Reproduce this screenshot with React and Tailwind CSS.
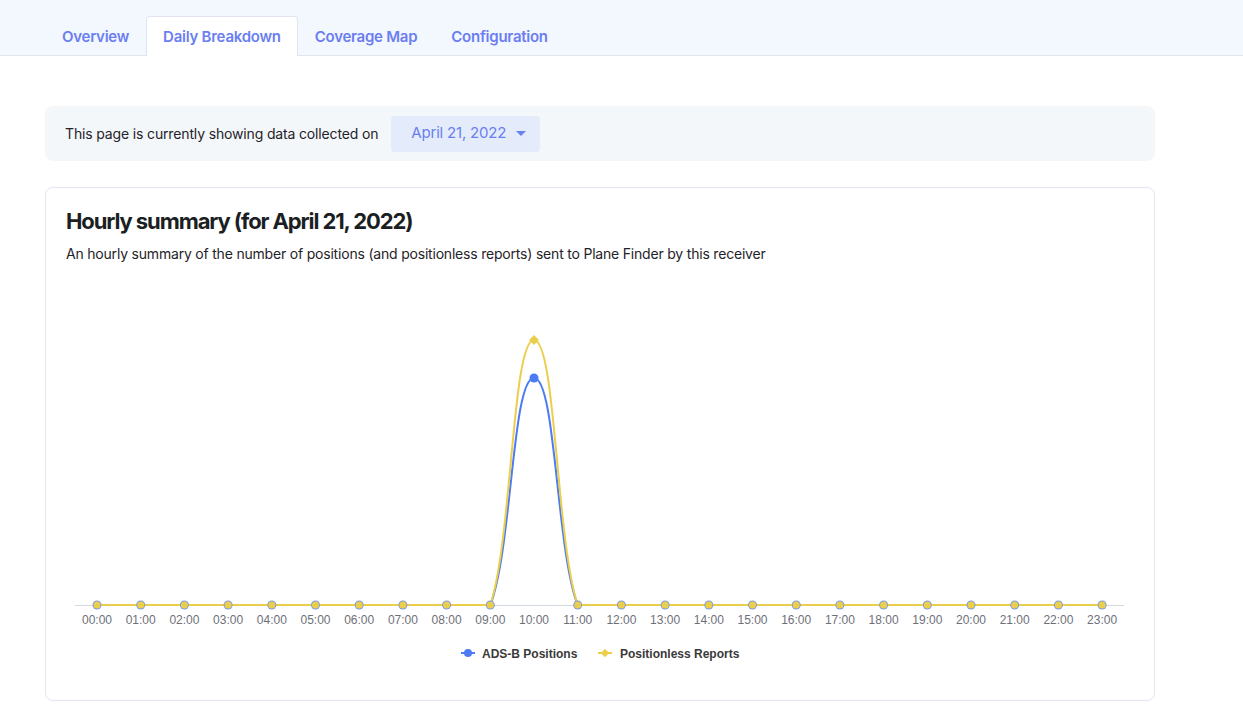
const TABS = ['Overview', 'Daily Breakdown', 'Coverage Map', 'Configuration'];

const HOURS = Array.from({ length: 24 }, (_, i) => `${String(i).padStart(2, '0')}:00`);

// values are already scaled to pixels above the axis
const ADSB = HOURS.map((_, i) => (i === 10 ? 227 : 0));
const POSITIONLESS = HOURS.map((_, i) => (i === 10 ? 265 : 0));

const X0 = 51;
const STEP = 43.7;
const BASE = 341;

function xAt(i) {
  return X0 + i * STEP;
}

// rough take on echarts' smooth line, clamped so flat runs stay flat
function smoothPath(values) {
  const pts = values.map((v, i) => [xAt(i), BASE - v]);
  const cps = pts.map((p, i) => {
    const prev = pts[i - 1] ?? p;
    const next = pts[i + 1] ?? p;
    const vx = (next[0] - prev[0]) * 0.25;
    let vy = (next[1] - prev[1]) * 0.25;
    if (prev[1] === p[1] && p[1] === next[1]) vy = 0;
    return {
      inn: [p[0] - vx, Math.min(BASE, Math.max(BASE - 265, p[1] - vy))],
      out: [p[0] + vx, Math.min(BASE, Math.max(BASE - 265, p[1] + vy))],
    };
  });
  let d = `M${pts[0][0]},${pts[0][1]}`;
  for (let i = 1; i < pts.length; i++) {
    const a = cps[i - 1].out;
    const b = cps[i].inn;
    d += ` C${a[0]},${a[1]} ${b[0]},${b[1]} ${pts[i][0]},${pts[i][1]}`;
  }
  return d;
}

function HourlyChart() {
  return (
    <svg width="1108" height="435" className="block">
      <line x1="29" y1={BASE + 0.5} x2="1078" y2={BASE + 0.5} stroke="#d3d9e4" strokeWidth="1" />
      <path d={smoothPath(ADSB)} fill="none" stroke="#4b7bf5" strokeWidth="2" />
      <path d={smoothPath(POSITIONLESS)} fill="none" stroke="#ebcf4c" strokeWidth="2" />
      {ADSB.map((v, i) => (
        <circle key={`a${i}`} cx={xAt(i)} cy={BASE - v} r="4.5" fill={v ? '#4b7bf5' : '#7e9be3'} />
      ))}
      {POSITIONLESS.map((v, i) =>
        v ? (
          <rect key={`p${i}`} x={xAt(i) - 3.5} y={BASE - v - 3.5} width="7" height="7" fill="#ebcf4c" transform={`rotate(45 ${xAt(i)} ${BASE - v})`} />
        ) : (
          <circle key={`p${i}`} cx={xAt(i)} cy={BASE - v} r="3.5" fill="#ebcf4c" />
        )
      )}
      {HOURS.map((h, i) => (
        <text
          key={h}
          x={xAt(i)}
          y="360"
          textAnchor="middle"
          fill="#6e7079"
          fontSize="12"
          fontFamily="'Liberation Sans', Arial, sans-serif"
        >
          {h}
        </text>
      ))}

      <g fontFamily="'Liberation Sans', Arial, sans-serif" fontSize="12" fontWeight="bold" fill="#3a3a3a">
        <line x1="415" y1="389" x2="429" y2="389" stroke="#4b7bf5" strokeWidth="2" />
        <circle cx="422" cy="389" r="4" fill="#4b7bf5" />
        <text x="436" y="393.5">ADS-B Positions</text>
        <line x1="552" y1="389" x2="566" y2="389" stroke="#ebcf4c" strokeWidth="2" />
        <rect x="556" y="386" width="6" height="6" fill="#ebcf4c" transform="rotate(45 559 389)" />
        <text x="574" y="393.5">Positionless Reports</text>
      </g>
    </svg>
  );
}

export default function App() {
  return (
    <div className="min-h-[726px] bg-white text-[#1f2329]" style={{ fontFamily: 'Inter, "Noto Sans", sans-serif' }}>
      <div className="h-[56px] bg-[#f3f7fe] border-b border-[#dfe4ee] flex items-end pl-[45px]">
        {TABS.map((tab) => {
          const active = tab === 'Daily Breakdown';
          return (
            <div
              key={tab}
              className={
                active
                  ? 'h-[40px] px-4 pt-px flex items-center bg-white border border-b-0 border-[#dfe4ee] rounded-t-[4px] -mb-px text-[15px] tracking-[-0.25px] font-semibold text-[#6a7ef2]'
                  : 'h-[40px] px-[17px] pt-[5px] flex items-center text-[15px] tracking-[-0.25px] font-semibold text-[#6a7ef2]'
              }
            >
              {tab}
            </div>
          );
        })}
      </div>

      <div className="ml-[45px] w-[1110px] pt-[50px]">
        <div className="h-[55px] bg-[#f4f7f9] rounded-lg flex items-center pl-5 gap-[13px]">
          <span className="text-[14px] tracking-[-0.15px]">This page is currently showing data collected on</span>
          <button className="h-[36px] w-[149px] rounded-[4px] bg-[#e4ebfb] flex items-center pl-5 gap-[10px] text-[15px] tracking-[-0.2px] text-[#6a7ff0]">
            April 21, 2022
            <svg width="10" height="5" viewBox="0 0 10 5">
              <path d="M0 0 L10 0 L5 5 Z" fill="#6a7ff0" />
            </svg>
          </button>
        </div>

        <div className="mt-[26px] h-[514px] border border-[#e3e5ef] rounded-lg">
          <div className="px-5 pt-[18px]">
            <h2 className="text-[22px] leading-[30px] font-bold tracking-[-1.1px] text-[#1b1f24]">
              Hourly summary (for April 21, 2022)
            </h2>
            <p className="mt-2 text-[14px] leading-5 tracking-[-0.2px]">
              An hourly summary of the number of positions (and positionless reports) sent to Plane Finder by this receiver
            </p>
          </div>
          <HourlyChart />
        </div>
      </div>
    </div>
  );
}
